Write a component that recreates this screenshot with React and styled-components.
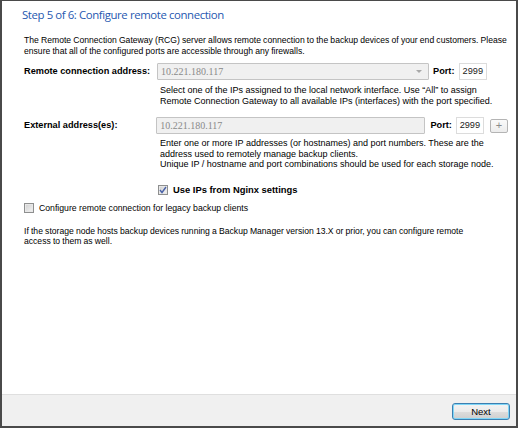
import React from "react";
import styled, { createGlobalStyle } from "styled-components";

const Global = createGlobalStyle`
  html, body { margin: 0; padding: 0; background: #fff; }
  body { font-family: "Liberation Sans", Arial, sans-serif; }
`;

const Window = styled.div`
  box-sizing: border-box;
  width: 518px;
  height: 428px;
  border: 2px solid #4a4a4a;
  border-top-width: 1px;
  display: flex;
  flex-direction: column;
  background: #fff;
`;

const Content = styled.div`
  flex: 1;
  padding: 4px 8px 0 20px;
  font-size: 8.8px;
  line-height: 10.5px;
  color: #000;
`;

const Title = styled.h1`
  margin: 0;
  font-family: "Open Sans", "Noto Sans", sans-serif;
  font-weight: 400;
  font-size: 11.4px;
  letter-spacing: -0.4px;
  line-height: 20px;
  color: #2658b0;
`;

const Para = styled.p`
  margin: ${(p) => p.$mt}px 0 0 2px;
  font-size: 8.6px;
  word-spacing: -0.2px;
  white-space: nowrap;
`;

const FieldRow = styled.div`
  display: flex;
  align-items: center;
  height: 17px;
  margin-top: ${(p) => p.$mt}px;
`;

const Label = styled.span`
  width: 135px;
  padding-left: 2px;
  box-sizing: border-box;
  font-weight: bold;
  font-size: 9.2px;
  white-space: nowrap;
`;

const FieldBox = styled.div`
  box-sizing: border-box;
  position: relative;
  width: ${(p) => p.$w}px;
  height: 17px;
  border: 1px solid #c4c4c4;
  border-radius: 1px;
  background: #f0f0f0;
  color: #8a8a8a;
  font-family: "Liberation Serif", "Times New Roman", serif;
  font-size: 10px;
  line-height: 15px;
  padding-left: 3px;
`;

const Arrow = styled.span`
  position: absolute;
  right: 6px;
  top: 6px;
  width: 0;
  height: 0;
  border-left: 3px solid transparent;
  border-right: 3px solid transparent;
  border-top: 3px solid #a8a8a8;
`;

const PortLabel = styled.span`
  font-weight: bold;
  font-size: 9.2px;
  margin-left: ${(p) => p.$ml}px;
  width: 26px;
`;

const PortInput = styled.div`
  box-sizing: border-box;
  width: 28px;
  height: 17px;
  border: 1px solid #dcdcdc;
  background: #fff;
  font-size: 9.2px;
  line-height: 15px;
  text-align: right;
  padding-right: 3px;
  color: #222;
`;

const PlusButton = styled.div`
  box-sizing: border-box;
  width: 18px;
  height: 14px;
  margin-left: 6px;
  border: 1px solid #b4b4b4;
  border-radius: 2px;
  background: linear-gradient(#fafafa, #ececec);
  color: #8a8a8a;
  font-size: 11px;
  line-height: 11px;
  text-align: center;
`;

const Help = styled.p`
  margin: ${(p) => p.$mt}px 0 0 138px;
  font-size: 9px;
  white-space: nowrap;
`;

const CheckRow = styled.label`
  display: flex;
  align-items: center;
  height: 13px;
  margin: ${(p) => p.$mt}px 0 0 ${(p) => p.$ml}px;
  font-weight: ${(p) => (p.$bold ? "bold" : "normal")};
  font-size: ${(p) => (p.$bold ? "9.4px" : "8.7px")};
  gap: 5px;
`;

const Box = styled.span`
  box-sizing: border-box;
  width: 10px;
  height: 10px;
  border: 1px solid #8e8f8f;
  background: linear-gradient(135deg, #cfcfcf, #f4f4f4);
  box-shadow: inset 0 0 0 1px #e8e8e8;
  display: flex;
  align-items: center;
  justify-content: center;
`;

const Footer = styled.div`
  height: 31px;
  border-top: 1px solid #dfdfdf;
  background: #f0f0f0;
  display: flex;
  align-items: center;
  justify-content: flex-end;
  padding-right: 6px;
`;

const NextButton = styled.button`
  box-sizing: border-box;
  width: 58px;
  height: 17px;
  margin-top: 1px;
  border: 1px solid #3c7fb1;
  border-radius: 3px;
  box-shadow: inset 0 0 0 1px #7fd6f7;
  background: linear-gradient(#f3f3f3 0%, #ebebeb 50%, #dddddd 51%, #cfcfcf 100%);
  font-family: "Liberation Sans", Arial, sans-serif;
  font-size: 9.5px;
  color: #000;
  padding: 0;
  line-height: 15px;
`;

function Check({ checked }) {
  return (
    <Box>
      {checked && (
        <svg width="8" height="8" viewBox="0 0 8 8">
          <path d="M1 4 L3 6.5 L7 1" fill="none" stroke="#4a62a8" strokeWidth="1.4" />
        </svg>
      )}
    </Box>
  );
}

export default function App() {
  return (
    <>
      <Global />
      <Window>
        <Content>
          <Title>Step 5 of 6: Configure remote connection</Title>
          <Para $mt={10}>
            The Remote Connection Gateway (RCG) server allows remote connection to the backup devices of your end customers. Please
            <br />
            ensure that all of the configured ports are accessible through any firewalls.
          </Para>
          <FieldRow $mt={7}>
            <Label>Remote connection address:</Label>
            <FieldBox $w={272}>
              10.221.180.117
              <Arrow />
            </FieldBox>
            <PortLabel $ml={4}>Port:</PortLabel>
            <PortInput>2999</PortInput>
          </FieldRow>
          <Help $mt={5}>
            Select one of the IPs assigned to the local network interface. Use “All” to assign
            <br />
            Remote Connection Gateway to all available IPs (interfaces) with the port specified.
          </Help>
          <FieldRow $mt={11}>
            <Label>External address(es):</Label>
            <FieldBox $w={271}>10.221.180.117</FieldBox>
            <PortLabel $ml={5}>Port:</PortLabel>
            <PortInput>2999</PortInput>
            <PlusButton>+</PlusButton>
          </FieldRow>
          <Help $mt={4}>
            Enter one or more IP addresses (or hostnames) and port numbers. These are the
            <br />
            address used to remotely manage backup clients.
            <br />
            Unique IP / hostname and port combinations should be used for each storage node.
          </Help>
          <CheckRow $mt={14} $ml={136} $bold>
            <Check checked />
            Use IPs from Nginx settings
          </CheckRow>
          <CheckRow $mt={5} $ml={2}>
            <Check />
            Configure remote connection for legacy backup clients
          </CheckRow>
          <Para $mt={11}>
            If the storage node hosts backup devices running a Backup Manager version 13.X or prior, you can configure remote
            <br />
            access to them as well.
          </Para>
        </Content>
        <Footer>
          <NextButton>Next</NextButton>
        </Footer>
      </Window>
    </>
  );
}
